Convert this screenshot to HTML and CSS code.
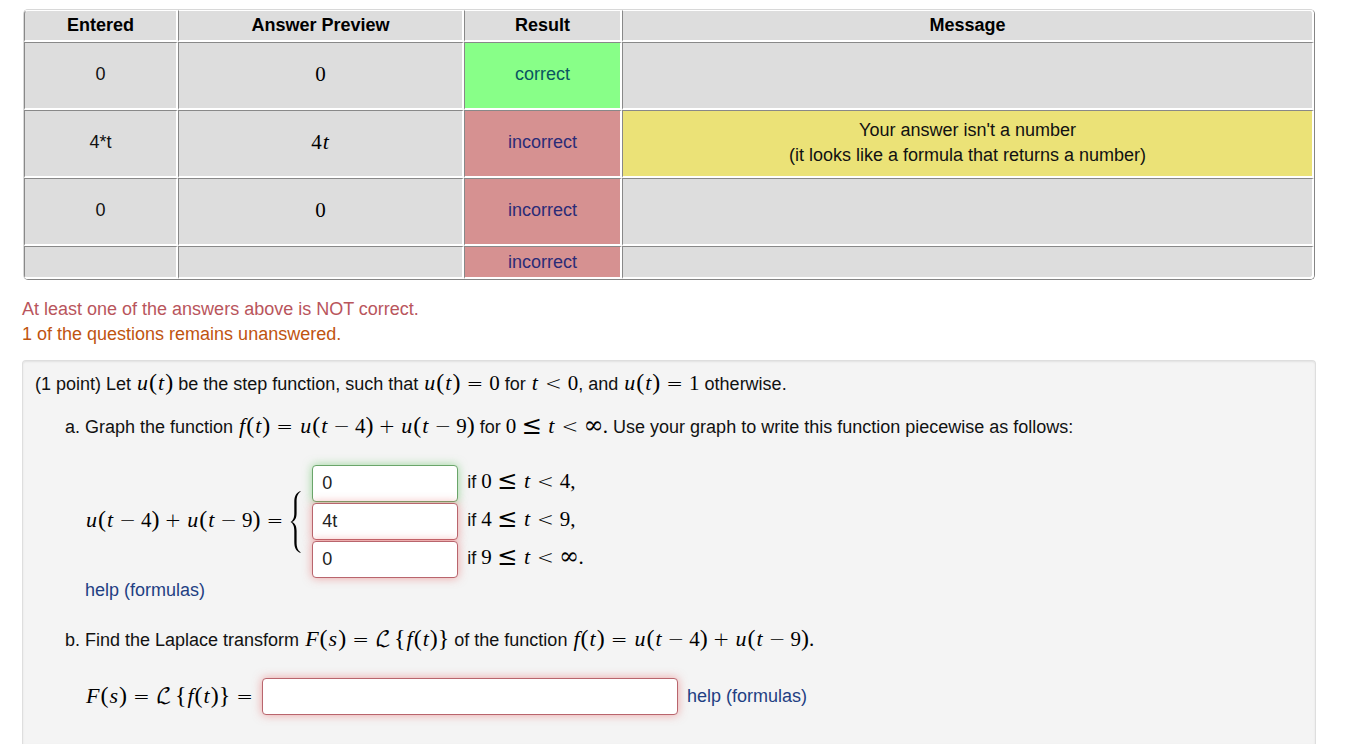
FILE: index.html
```html
<!DOCTYPE html>
<html lang="en">
<head>
<meta charset="utf-8">
<title>Step function problem</title>
<link rel="stylesheet" href="styles.css">
</head>
<body>
<div class="results-wrap">
<table class="results">
  <colgroup><col class="col-entered"><col class="col-preview"><col class="col-result"><col></colgroup>
  <thead>
    <tr><th>Entered</th><th>Answer Preview</th><th>Result</th><th>Message</th></tr>
  </thead>
  <tbody>
    <tr class="tall"><td>0</td><td><span class="math">0</span></td><td class="correct"><a href="#ans1">correct</a></td><td></td></tr>
    <tr class="tall"><td>4*t</td><td><span class="math">4<i>t</i></span></td><td class="incorrect"><a href="#ans2">incorrect</a></td><td class="warning">Your answer isn't a number<br>(it looks like a formula that returns a number)</td></tr>
    <tr class="tall"><td>0</td><td><span class="math">0</span></td><td class="incorrect"><a href="#ans3">incorrect</a></td><td></td></tr>
    <tr><td></td><td></td><td class="incorrect"><a href="#ans4">incorrect</a></td><td></td></tr>
  </tbody>
</table>
</div>

<div class="summary">
  <div class="wrong">At least one of the answers above is NOT correct.</div>
  <div class="unanswered">1 of the questions remains unanswered.</div>
</div>

<main class="problem">
  <p class="intro">(1 point) Let <span class="math"><i>u</i><b>(</b><i>t</i><b>)</b></span> be the step function, such that <span class="math"><i>u</i><b>(</b><i>t</i><b>)</b><span class="rel">=</span>0</span> for <span class="math"><i>t</i><span class="rel">&lt;</span>0</span>, and <span class="math"><i>u</i><b>(</b><i>t</i><b>)</b><span class="rel">=</span>1</span> otherwise.</p>

  <ol class="parts">
    <li>
      <p class="prompt">Graph the function <span class="math"><i>f</i><b>(</b><i>t</i><b>)</b><span class="rel">=</span><i>u</i><b>(</b><i>t</i><span class="bin">−</span>4<b>)</b><span class="bin">+</span><i>u</i><b>(</b><i>t</i><span class="bin">−</span>9<b>)</b></span> for <span class="math">0<span class="rel wide-sign">≤</span><i>t</i><span class="rel">&lt;</span><span class="wide-sign">∞</span>.</span> Use your graph to write this function piecewise as follows:</p>
      <div class="piecewise">
        <span class="math"><i>u</i><b>(</b><i>t</i><span class="bin">−</span>4<b>)</b><span class="bin">+</span><i>u</i><b>(</b><i>t</i><span class="bin">−</span>9<b>)</b><span class="rel">=</span></span>
        <svg class="brace" viewBox="0 0 11 64" aria-hidden="true"><path d="M10.500 1C6 3 4.300 6 4.300 12V23C4.300 28 3 30.500 .5 32C3 33.500 4.300 36 4.300 41V52C4.300 58 6 61 10.500 63V62.200C7.500 60 6.600 57 6.600 52V41C6.600 36 5.200 33.500 2 32C5.200 30.500 6.600 28 6.600 23V12C6.600 7 7.500 4 10.500 1.800Z"/></svg>
        <div class="cases">
          <input class="answer is-correct" id="ans1" type="text" value="0" aria-labelledby="case1">
          <label id="case1" for="ans1">if <span class="math">0<span class="rel wide-sign">≤</span><i>t</i><span class="rel">&lt;</span>4,</span></label>
          <input class="answer" id="ans2" type="text" value="4t" aria-labelledby="case2">
          <label id="case2" for="ans2">if <span class="math">4<span class="rel wide-sign">≤</span><i>t</i><span class="rel">&lt;</span>9,</span></label>
          <input class="answer" id="ans3" type="text" value="0" aria-labelledby="case3">
          <label id="case3" for="ans3">if <span class="math">9<span class="rel wide-sign">≤</span><i>t</i><span class="rel">&lt;</span><span class="wide-sign">∞</span>.</span></label>
        </div>
      </div>
      <a class="help" href="#help">help (formulas)</a>
    </li>
    <li>
      <p class="prompt">Find the Laplace transform <span class="math"><i>F</i><b>(</b><i>s</i><b>)</b><span class="rel">=</span><span class="script">ℒ</span><b>{</b><i>f</i><b>(</b><i>t</i><b>)}</b></span> of the function <span class="math"><i>f</i><b>(</b><i>t</i><b>)</b><span class="rel">=</span><i>u</i><b>(</b><i>t</i><span class="bin">−</span>4<b>)</b><span class="bin">+</span><i>u</i><b>(</b><i>t</i><span class="bin">−</span>9<b>)</b>.</span></p>
      <div class="transform">
        <label class="math" for="ans4"><i>F</i><b>(</b><i>s</i><b>)</b><span class="rel">=</span><span class="script">ℒ</span><b>{</b><i>f</i><b>(</b><i>t</i><b>)}</b><span class="rel">=</span></label>
        <input class="answer wide" id="ans4" type="text" value="">
        <a href="#help">help (formulas)</a>
      </div>
    </li>
  </ol>
</main>
</body>
</html>
```
FILE: styles.css
```css
* { box-sizing: border-box; }

body {
  display: flex;
  flex-direction: column;
  min-height: 100vh;
  margin: 0;
  padding: 9px 35px 0 22px;
  background: #fff;
  color: #111;
  font: 18px/25px "Liberation Sans", Arial, sans-serif;
}

p { margin: 0; }
a { color: #1f3f83; text-decoration: none; }

/* Results table */
.results-wrap { padding: 0 1px; }
.results {
  width: 100%;
  border: 1px solid;
  border-color: #d8d8d8 #858585 #858585 #d8d8d8;
  border-radius: 5px;
  border-spacing: 0;
  table-layout: fixed;
  text-align: center;
}
.col-entered { width: 154px; }
.col-preview { width: 286px; }
.col-result { width: 158px; }

.results th,
.results td {
  height: 32px;
  padding: 2px;
  border: solid #fff;
  border-width: 1px 2px 2px 1px;
  border-left-color: #888;
  background: #ddd;
}
.results td { height: 33px; border-top-color: #888; }
.results .tall td { height: 68px; padding-bottom: 4px; }
.results th { color: #000; }
.results thead th:first-child { border-top-left-radius: 4px; }
.results thead th:last-child { border-top-right-radius: 4px; }
.results tr:last-child td:first-child { border-bottom-left-radius: 4px; }
.results tr:last-child td:last-child { border-bottom-right-radius: 4px; }
.results .correct { background: #8f8; }
.results .incorrect { background: #d69191; }
.results .warning { background: #ebe277; }
.incorrect a { color: #2b2b77; }
.correct a { color: #0a5560; }

/* Summary */
.summary { margin: 17px 0 13px; }
.wrong { color: #b9555c; }
.unanswered { color: #bf5410; }

/* Problem panel */
.problem {
  flex: 1;
  padding: 10px 12px 16px;
  border: 1px solid #dedede;
  border-bottom: 0;
  border-radius: 4px 4px 0 0;
  background: #f4f4f4;
  box-shadow: inset 0 1px 2px rgba(0, 0, 0, 0.08);
}
.parts {
  margin: 17px 0 0;
  padding-left: 50px;
  list-style: lower-alpha;
}
.parts li + li { margin-top: 24px; }

.piecewise {
  display: flex;
  align-items: center;
  margin-top: 25px;
}
.piecewise > .math { padding-bottom: 4px; }
.brace { width: 11px; height: 64px; margin: 0 11px 0 1px; }
.cases {
  display: grid;
  grid-template-columns: 146px auto;
  align-items: center;
  gap: 1px 9px;
}
.cases label { padding-bottom: 4px; }
.help { display: block; width: max-content; }
.transform {
  display: flex;
  align-items: center;
  gap: 9px;
  margin-top: 25px;
}
.transform .math { padding-bottom: 2px; }
.transform .rel:last-child { margin-right: 0; }

.answer {
  width: 100%;
  height: 37px;
  padding: 4px 9px;
  border: 1px solid #b9656d;
  border-radius: 4px;
  background: #fff;
  box-shadow: 0 0 10px rgba(230, 80, 80, 0.5);
  color: #222;
  font: inherit;
}
.answer.is-correct {
  border-color: #6aa56a;
  box-shadow: 0 0 10px rgba(80, 190, 80, 0.55);
}
.answer.wide { width: 416px; }

/* Math notation */
.math {
  color: #000;
  font: 21px/24px "Liberation Serif", "Times New Roman", serif;
  white-space: nowrap;
}
.math i { margin: 0 1px; font-size: 22px; line-height: 0; }
.math b { font-size: 24px; font-weight: 400; line-height: 0; }
.rel, .bin {
  font-family: "DejaVu Sans Light", "DejaVu Sans", sans-serif;
  font-size: 20px;
  font-weight: 200;
  line-height: 0;
}
.rel { margin: 0 6px; }
.bin { margin: 0 5px; }
.wide-sign {
  font-family: "DejaVu Math TeX Gyre", "Liberation Serif", serif;
  font-size: 24px;
  font-weight: 400;
  line-height: 0;
}
.script {
  margin-right: 3px;
  font-family: "DejaVu Math TeX Gyre", "DejaVu Serif", serif;
  line-height: 0;
}
```
